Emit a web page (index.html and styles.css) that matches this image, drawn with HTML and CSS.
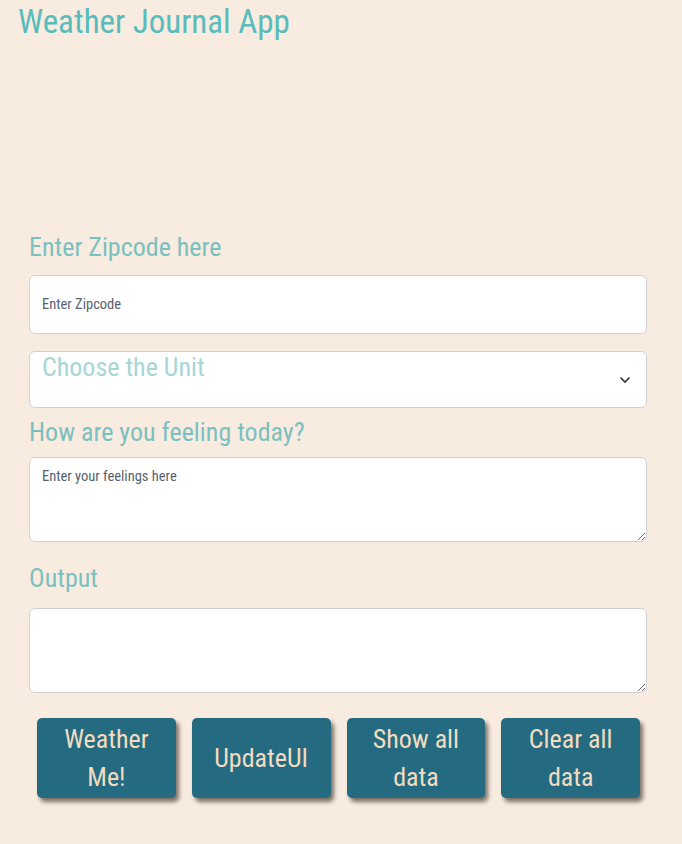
FILE: index.html
```html
<!DOCTYPE html>
<html lang="en">
<head>
<meta charset="utf-8">
<title>Weather Journal App</title>
<link rel="stylesheet" href="styles.css">
</head>
<body>
<div class="app">
  <h1 class="title">Weather Journal App</h1>
  <form class="journal">
    <label class="label label-zip" for="zip">Enter Zipcode here</label>
    <input class="field" id="zip" type="text" placeholder="Enter Zipcode">
    <div class="select-wrap">
      <select class="field select" id="unit">
        <option>Choose the Unit</option>
      </select>
      <svg class="chevron" width="12" height="8" viewBox="0 0 12 8"><path d="M1.5 1.5 L6 6 L10.5 1.5" fill="none" stroke="#333" stroke-width="1.6"/></svg>
    </div>
    <label class="label label-feel" for="feelings">How are you feeling today?</label>
    <textarea class="field area" id="feelings" placeholder="Enter your feelings here"></textarea>
    <label class="label label-out" for="output">Output</label>
    <textarea class="field area" id="output"></textarea>
    <div class="actions">
      <button type="button" class="btn">Weather Me!</button>
      <button type="button" class="btn">UpdateUI</button>
      <button type="button" class="btn">Show all data</button>
      <button type="button" class="btn">Clear all data</button>
    </div>
  </form>
</div>
</body>
</html>
```

FILE: styles.css
```css
html, body {
  margin: 0;
  padding: 0;
  background: #f8ebdf;
}
body {
  font-family: "Roboto Condensed", Roboto, "Open Sans", "DejaVu Sans", sans-serif;
  font-stretch: 75%;
}
.app {
  padding: 0 35px 40px 18px;
}
.title {
  margin: 0;
  padding-top: 2px;
  font-size: 33px;
  line-height: 40px;
  font-weight: normal;
  color: #58bcbc;
}
.journal {
  display: flex;
  flex-direction: column;
  padding-left: 11px;
  padding-top: 187px;
}
.label {
  display: block;
  font-size: 26px;
  line-height: 36px;
  color: #7bc0c0;
}
.label-zip { margin-bottom: 10px; }
.label-feel { margin-top: 6px; margin-bottom: 7px; }
.label-out { margin-top: 18px; margin-bottom: 12px; }
.field {
  box-sizing: border-box;
  width: 100%;
  margin: 0;
  background: #fff;
  border: 1px solid #cfd0d4;
  border-radius: 6px;
  font-family: inherit;
  font-stretch: inherit;
  outline: none;
}
input.field {
  height: 59px;
  padding: 0 12px;
  font-size: 14.5px;
  color: #575f6e;
}
input.field::placeholder,
textarea.field::placeholder {
  color: #575f6e;
  opacity: 1;
}
.select-wrap {
  position: relative;
  margin-top: 17px;
}
.select {
  display: block;
  height: 57px;
  padding: 0 12px 28px;
  appearance: none;
  -webkit-appearance: none;
  font-size: 26px;
  color: #a6d6d6;
}
.chevron {
  position: absolute;
  right: 16px;
  top: 25px;
  pointer-events: none;
}
.area {
  height: 85px;
  padding: 10px 12px;
  font-size: 14.5px;
  color: #575f6e;
  resize: vertical;
}
.actions {
  display: flex;
  gap: 16px;
  padding: 0 7px 0 8px;
  margin-top: 25px;
}
.btn {
  width: 139px;
  height: 80px;
  padding: 0 8px;
  border: none;
  border-radius: 5px;
  background: #246b82;
  color: #f3dcbf;
  font-family: inherit;
  font-stretch: inherit;
  font-size: 26px;
  line-height: 38px;
  box-shadow: 3px 4px 4px rgba(40, 30, 20, 0.6);
  cursor: pointer;
}
```
